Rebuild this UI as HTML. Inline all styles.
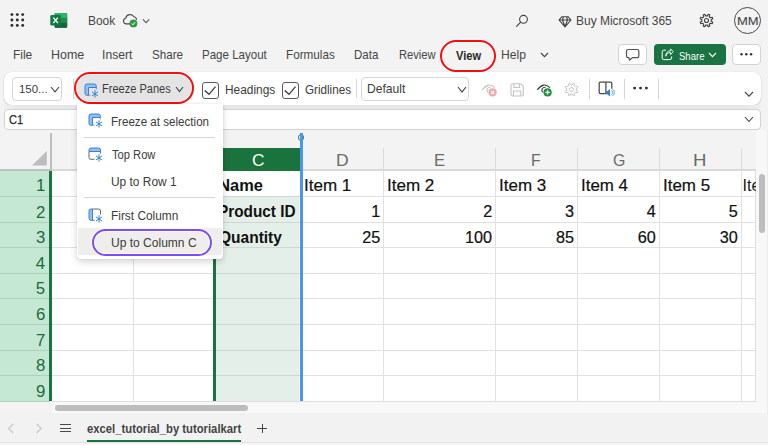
<!DOCTYPE html>
<html><head><meta charset="utf-8">
<style>
*{margin:0;padding:0;box-sizing:border-box}
html,body{width:768px;height:445px;overflow:hidden;background:#f3f3f3;font-family:"Liberation Sans",sans-serif;color:#424242;position:relative}
.a{position:absolute;white-space:nowrap}
.dot{position:absolute;width:3px;height:3px;background:#2b2b2b;border-radius:1px}
.sep{position:absolute;width:1px;background:#d6d6d6}
</style></head><body>
<svg class="a" style="left:8px;top:11px" width="18" height="18" viewBox="0 0 18 18"><circle cx="3.9" cy="3.6" r="1.45" fill="#2b2b2b"/><circle cx="9.3" cy="3.6" r="1.45" fill="#2b2b2b"/><circle cx="14.7" cy="3.6" r="1.45" fill="#2b2b2b"/><circle cx="3.9" cy="9.0" r="1.45" fill="#2b2b2b"/><circle cx="9.3" cy="9.0" r="1.45" fill="#2b2b2b"/><circle cx="14.7" cy="9.0" r="1.45" fill="#2b2b2b"/><circle cx="3.9" cy="14.4" r="1.45" fill="#2b2b2b"/><circle cx="9.3" cy="14.4" r="1.45" fill="#2b2b2b"/><circle cx="14.7" cy="14.4" r="1.45" fill="#2b2b2b"/></svg>

<svg class="a" style="left:50px;top:12px" width="18" height="17" viewBox="0 0 18 17">
<path d="M4.6 0.9 H16 A1.2 1.2 0 0 1 17.2 2.1 V14.5 A1.2 1.2 0 0 1 16 15.7 H5.8 A1.2 1.2 0 0 1 4.6 14.5 Z" fill="#1d8a50"/>
<path d="M4.6 0.9 H16 A1.2 1.2 0 0 1 17.2 2.1 V5.9 H4.6 Z" fill="#2fb26f"/>
<rect x="4.6" y="5.9" width="12.6" height="5" fill="#1e8b4f"/>
<path d="M4.6 10.9 H17.2 V14.5 A1.2 1.2 0 0 1 16 15.7 H5.8 A1.2 1.2 0 0 1 4.6 14.5 Z" fill="#17653a"/>
<rect x="0.3" y="3" width="10.6" height="10.6" rx="1.3" fill="#107c41"/>
<path d="M3.3 5.6 L7.9 11 M7.9 5.6 L3.3 11" stroke="#fff" stroke-width="1.3"/>
</svg>
<div class="a" style="left:87.92px;top:11.80px;font-size:13.23px;line-height:18px;color:#464646;transform:scaleX(0.9043);transform-origin:0 0">Book</div>
<svg class="a" style="left:118px;top:8px" width="38" height="24" viewBox="0 0 38 24">
<path d="M12.5 15.9 H8.2 A2.9 2.9 0 0 1 7.7 10.2 A4.5 4.5 0 0 1 16 8.8 A2.7 2.7 0 0 1 18.4 11.9" fill="none" stroke="#4a4a4a" stroke-width="1.15"/>
<circle cx="15.4" cy="15.4" r="3.9" fill="#2e9a47"/>
<path d="M13.6 15.6 L14.9 16.8 L17.1 14.2" stroke="#fff" stroke-width="1" fill="none"/>
<path d="M24.9 11.3 L28.1 14.6 L31.3 11.3" stroke="#5a5a5a" stroke-width="1.1" fill="none"/>
</svg>
<svg class="a" style="left:515px;top:14px" width="14" height="14" viewBox="0 0 14 14"><circle cx="8.5" cy="5.3" r="3.9" fill="none" stroke="#424242" stroke-width="1.1"/><path d="M5.7 8.2 L1.3 12.6" stroke="#424242" stroke-width="1.2"/></svg>
<svg class="a" style="left:557.5px;top:15.5px" width="14" height="12" viewBox="0 0 14 12"><path d="M3.7 0.8 H10.3 L13 4 L7 10.8 L1 4 Z M1 4 H13 M5.3 0.8 L4.5 4 L7 10.8 L9.5 4 L8.7 0.8" fill="none" stroke="#424242" stroke-width="1.1" stroke-linejoin="round"/></svg>
<div class="a" style="left:576.02px;top:12.10px;font-size:13.08px;line-height:18px;color:#464646;transform:scaleX(0.9149);transform-origin:0 0">Buy Microsoft 365</div>
<svg class="a" style="left:699px;top:13px" width="15" height="15" viewBox="0 0 15 15"><path d="M12.14 8.27 L13.77 9.22 L13.15 10.72 L11.32 10.23 L10.23 11.32 L10.72 13.15 L9.22 13.77 L8.27 12.14 L6.73 12.14 L5.78 13.77 L4.28 13.15 L4.77 11.32 L3.68 10.23 L1.85 10.72 L1.23 9.22 L2.86 8.27 L2.86 6.73 L1.23 5.78 L1.85 4.28 L3.68 4.77 L4.77 3.68 L4.28 1.85 L5.78 1.23 L6.73 2.86 L8.27 2.86 L9.22 1.23 L10.72 1.85 L10.23 3.68 L11.32 4.77 L13.15 4.28 L13.77 5.78 L12.14 6.73 Z" fill="none" stroke="#424242" stroke-width="1.15" stroke-linejoin="round"/><circle cx="7.5" cy="7.5" r="2" fill="none" stroke="#424242" stroke-width="1.1"/></svg>
<div class="a" style="left:734.2px;top:6.9px;width:27px;height:27px;border:1.25px solid #4a4a4a;border-radius:50%"></div>
<div class="a" style="left:736.53px;top:14.20px;font-size:10.61px;line-height:15px;color:#444;transform:scaleX(1.2236);transform-origin:0 0;-webkit-text-stroke:0.1px #444">MM</div>
<div class="a" style="left:12.52px;top:46.30px;font-size:13.37px;line-height:18px;color:#464646;transform:scaleX(0.8939);transform-origin:0 0">File</div>
<div class="a" style="left:50.58px;top:46.30px;font-size:13.37px;line-height:18px;color:#464646;transform:scaleX(0.9329);transform-origin:0 0">Home</div>
<div class="a" style="left:102.48px;top:46.30px;font-size:13.37px;line-height:18px;color:#464646;transform:scaleX(0.9093);transform-origin:0 0">Insert</div>
<div class="a" style="left:151.77px;top:46.30px;font-size:13.37px;line-height:18px;color:#464646;transform:scaleX(0.8700);transform-origin:0 0">Share</div>
<div class="a" style="left:201.55px;top:46.30px;font-size:13.37px;line-height:18px;color:#464646;transform:scaleX(0.8633);transform-origin:0 0">Page Layout</div>
<div class="a" style="left:286.14px;top:46.30px;font-size:13.37px;line-height:18px;color:#464646;transform:scaleX(0.8754);transform-origin:0 0">Formulas</div>
<div class="a" style="left:354.45px;top:46.30px;font-size:13.37px;line-height:18px;color:#464646;transform:scaleX(0.8619);transform-origin:0 0">Data</div>
<div class="a" style="left:398.98px;top:46.30px;font-size:13.37px;line-height:18px;color:#464646;transform:scaleX(0.8345);transform-origin:0 0">Review</div>
<div class="a" style="left:500.51px;top:46.30px;font-size:13.37px;line-height:18px;color:#464646;transform:scaleX(0.9054);transform-origin:0 0">Help</div>
<div class="a" style="left:455.72px;top:46.50px;font-size:12.94px;line-height:17px;color:#2b2b2b;font-weight:bold;transform:scaleX(0.8567);transform-origin:0 0">View</div>
<svg class="a" style="left:540px;top:52px" width="9" height="6" viewBox="0 0 9 6"><path d="M1 1 L4.5 4.6 L8 1" stroke="#424242" stroke-width="1.1" fill="none"/></svg>
<div class="a" style="left:440.4px;top:39.75px;width:55.7px;height:32.15px;border:2.9px solid #ff0a0a;border-radius:16px;box-shadow:0 0 0 0.9px rgba(255,255,255,0.75),inset 0 0 0 0.9px rgba(255,255,255,0.75)"></div>
<div class="a" style="left:618px;top:44px;width:29px;height:21px;background:#fff;border:1px solid #d4d4d4;border-radius:4px"></div>
<svg class="a" style="left:625px;top:48px" width="15" height="14" viewBox="0 0 15 14"><path d="M7.3 9.6 H12.2 A1.6 1.6 0 0 0 13.8 8 V3.1 A1.6 1.6 0 0 0 12.2 1.5 H3.1 A1.6 1.6 0 0 0 1.5 3.1 V8 A1.6 1.6 0 0 0 3.1 9.6 H3.9 L4.5 12.2 Z" fill="none" stroke="#505050" stroke-width="1.2" stroke-linejoin="round"/></svg>
<div class="a" style="left:653.5px;top:44px;width:72px;height:21px;background:#1a7343;border-radius:4px"></div>
<svg class="a" style="left:661px;top:48px" width="13" height="13" viewBox="0 0 13 13"><path d="M5 2.2 H2.8 A1.6 1.6 0 0 0 1.2 3.8 V10 A1.6 1.6 0 0 0 2.8 11.6 H9 A1.6 1.6 0 0 0 10.6 10 V8.5" fill="none" stroke="#fff" stroke-width="1"/><path d="M4.8 8.2 C5.2 5.6 7 4.6 9.6 4.6 V6.6 L12.2 3.6 L9.6 0.9 V2.8 C6.4 2.8 4.9 5 4.8 8.2 Z" fill="none" stroke="#fff" stroke-width="0.9" stroke-linejoin="round"/></svg>
<svg class="a" style="left:708px;top:52px" width="9" height="6" viewBox="0 0 9 6"><path d="M1 1 L4.5 4.6 L8 1" stroke="#fff" stroke-width="1.1" fill="none"/></svg>
<div class="a" style="left:732px;top:44px;width:29px;height:21px;background:#fff;border:1px solid #d4d4d4;border-radius:4px"></div>
<div class="a" style="left:678.57px;top:47.70px;font-size:11.48px;line-height:16px;color:#fff;transform:scaleX(0.8308);transform-origin:0 0">Share</div>
<svg class="a" style="left:736px;top:50px" width="20" height="8" viewBox="0 0 20 8"><circle cx="5.5" cy="4.2" r="1.2" fill="#333"/><circle cx="10.3" cy="4.2" r="1.2" fill="#333"/><circle cx="15.1" cy="4.2" r="1.2" fill="#333"/></svg>
<div class="a" style="left:4px;top:72px;width:757px;height:33px;background:#fff;border-radius:8px;box-shadow:0 1px 2px rgba(0,0,0,0.16),0 0 1px rgba(0,0,0,0.12)"></div>
<div class="a" style="left:11.5px;top:77px;width:50px;height:23.5px;border:1px solid #d6d6d6;border-radius:4px;background:#fff"></div>
<div class="a" style="left:18.63px;top:80.80px;font-size:11.63px;line-height:16px;color:#3b3b3b;transform:scaleX(0.9836);transform-origin:0 0">150...</div>
<svg class="a" style="left:50.4px;top:85.6px" width="10" height="7" viewBox="0 0 10 7"><path d="M1 1 L5.00 5.80 L9 1" stroke="#424242" stroke-width="1.1" fill="none"/></svg>
<div class="sep" style="left:72.5px;top:79px;height:20px"></div>
<div class="a" style="left:75.5px;top:73.5px;width:118px;height:29.5px;background:#e4e4e4;border-radius:15px"></div>
<svg class="a" style="left:83.5px;top:82.5px" width="16" height="15" viewBox="0 0 16 15">
<path d="M12.3 4.5 V3 A2 2 0 0 0 10.3 1 H3 A2 2 0 0 0 1 3 V10.3 A2 2 0 0 0 3 12.3 H4.5 V4.5 Z" fill="#8ec0f2" stroke="#3a80d8" stroke-width="1"/>
<path d="M12.3 4.5 V6.5 M4.5 12.3 H6.5" stroke="#777" stroke-width="0.8"/>
<path d="M11 7.2 V14.6 M8 8.9 L14 12.9 M14 8.9 L8 12.9" stroke="#2f86d6" stroke-width="1"/>
</svg>
<div class="a" style="left:101.59px;top:81.10px;font-size:12.35px;line-height:17px;color:#3b3b3b;transform:scaleX(0.8946);transform-origin:0 0">Freeze Panes</div>
<svg class="a" style="left:175.0px;top:85.7px" width="9" height="7" viewBox="0 0 9 7"><path d="M1 1 L4.50 5.60 L8 1" stroke="#424242" stroke-width="1.1" fill="none"/></svg>
<div class="a" style="left:74.1px;top:71.9px;width:120.4px;height:32.3px;border:2.9px solid #ff0a0a;border-radius:16.5px;box-shadow:0 0 0 0.9px rgba(255,255,255,0.75),inset 0 0 0 0.9px rgba(255,255,255,0.75)"></div>
<div class="a" style="left:202.1px;top:82px;width:16.7px;height:16.7px;border:1px solid #5a5a5a;border-radius:3px"></div><svg class="a" style="left:202.1px;top:82px" width="17" height="17" viewBox="0 0 17 17"><path d="M2.7 8.6 L7 12.3 L13.5 4.6" fill="none" stroke="#3b3b3b" stroke-width="1.3"/></svg>
<div class="a" style="left:225.03px;top:82.40px;font-size:12.21px;line-height:17px;color:#3b3b3b;transform:scaleX(0.9732);transform-origin:0 0">Headings</div>
<div class="a" style="left:282.0px;top:82px;width:16.7px;height:16.7px;border:1px solid #5a5a5a;border-radius:3px"></div><svg class="a" style="left:282.0px;top:82px" width="17" height="17" viewBox="0 0 17 17"><path d="M2.7 8.6 L7 12.3 L13.5 4.6" fill="none" stroke="#3b3b3b" stroke-width="1.3"/></svg>
<div class="a" style="left:305.41px;top:82.40px;font-size:12.21px;line-height:17px;color:#3b3b3b;transform:scaleX(0.9550);transform-origin:0 0">Gridlines</div>
<div class="sep" style="left:355.5px;top:78.5px;height:19.5px"></div>
<div class="a" style="left:360.5px;top:77px;width:108px;height:23.5px;border:1px solid #d6d6d6;border-radius:4px;background:#fff"></div>
<div class="a" style="left:366.81px;top:81.00px;font-size:12.35px;line-height:17px;color:#3b3b3b;transform:scaleX(0.9779);transform-origin:0 0">Default</div>
<svg class="a" style="left:456.6px;top:85.5px" width="10" height="8" viewBox="0 0 10 8"><path d="M1 1 L5.00 6.00 L9 1" stroke="#424242" stroke-width="1.1" fill="none"/></svg>
<svg class="a" style="left:477px;top:78px" width="26" height="22" viewBox="0 0 26 22"><path d="M5.3 11.9 Q11.5 3.4 17.9 9.7" fill="none" stroke="#c4c4c4" stroke-width="1.15"/><path d="M10.6 14.6 Q8.2 9.6 13.6 9.3" fill="none" stroke="#c4c4c4" stroke-width="1.15"/><circle cx="15.6" cy="14.4" r="4.1" fill="#f2a7ad"/><path d="M14 12.8 L17.2 16 M17.2 12.8 L14 16" stroke="#fff" stroke-width="1.1"/></svg>
<svg class="a" style="left:509.5px;top:82.5px" width="15" height="14" viewBox="0 0 15 14"><path d="M2.5 0.8 H10.8 L13.3 3.3 V11.5 A1.5 1.5 0 0 1 11.8 13 H2.5 A1.5 1.5 0 0 1 1 11.5 V2.3 A1.5 1.5 0 0 1 2.5 0.8 Z M4 0.8 V4.5 H9.5 V0.8 M3.5 13 V8 H10.8 V13" fill="none" stroke="#c4c4c4" stroke-width="1.1"/></svg>
<svg class="a" style="left:532px;top:78px" width="26" height="22" viewBox="0 0 26 22"><path d="M5.3 11.9 Q11.5 3.4 17.9 9.7" fill="none" stroke="#3b3b3b" stroke-width="1.15"/><path d="M10.6 14.6 Q8.2 9.6 13.6 9.3" fill="none" stroke="#3b3b3b" stroke-width="1.15"/><circle cx="15.6" cy="14.4" r="4.1" fill="#1f8f3e"/><path d="M15.6 12.2 V16.6 M13.4 14.4 H17.8" stroke="#fff" stroke-width="1.4"/></svg>
<svg class="a" style="left:563.5px;top:82px" width="15" height="15" viewBox="0 0 15 15"><path d="M12.14 8.27 L13.77 9.22 L13.15 10.72 L11.32 10.23 L10.23 11.32 L10.72 13.15 L9.22 13.77 L8.27 12.14 L6.73 12.14 L5.78 13.77 L4.28 13.15 L4.77 11.32 L3.68 10.23 L1.85 10.72 L1.23 9.22 L2.86 8.27 L2.86 6.73 L1.23 5.78 L1.85 4.28 L3.68 4.77 L4.77 3.68 L4.28 1.85 L5.78 1.23 L6.73 2.86 L8.27 2.86 L9.22 1.23 L10.72 1.85 L10.23 3.68 L11.32 4.77 L13.15 4.28 L13.77 5.78 L12.14 6.73 Z" fill="none" stroke="#c4c4c4" stroke-width="1" stroke-linejoin="round"/><circle cx="7.5" cy="7.5" r="2" fill="none" stroke="#c4c4c4" stroke-width="1"/></svg>
<div class="sep" style="left:588.5px;top:79px;height:19.5px"></div>
<svg class="a" style="left:594px;top:78px" width="26" height="22" viewBox="0 0 26 22"><path d="M11.9 15.6 H6.3 A1.1 1.1 0 0 1 5.2 14.5 V5.3 A1.1 1.1 0 0 1 6.3 4.2 H16.7 A1.1 1.1 0 0 1 17.8 5.3 V10.8 M11.9 4.2 V15.6" fill="none" stroke="#4a4a4a" stroke-width="1.25" stroke-linejoin="round"/><path d="M12 13.2 H13.2 L16 10.9 V18.5 L13.2 16.2 H12 Z" fill="#2f80d1"/><path d="M17.3 12.4 A2.4 2.4 0 0 1 17.3 16.6 M18.6 11.1 A4.2 4.2 0 0 1 18.6 17.9" fill="none" stroke="#5a9ee0" stroke-width="1"/></svg>
<div class="sep" style="left:623.5px;top:79px;height:19.5px"></div>
<svg class="a" style="left:630px;top:84px" width="20" height="8" viewBox="0 0 20 8"><circle cx="4.6" cy="4.1" r="1.45" fill="#2e2e2e"/><circle cx="10.5" cy="4.1" r="1.45" fill="#2e2e2e"/><circle cx="16.4" cy="4.1" r="1.45" fill="#2e2e2e"/></svg>
<div class="sep" style="left:658.3px;top:79px;height:19.5px"></div>
<svg class="a" style="left:743.5px;top:91.2px" width="10" height="7" viewBox="0 0 10 7"><path d="M1 1 L5.00 5.10 L9 1" stroke="#424242" stroke-width="1.1" fill="none"/></svg>
<div class="a" style="left:4px;top:105px;width:757px;height:5px;background:linear-gradient(90deg,#f0f0f0 0px,#e7e7e7 14px,#e7e7e7 743px,#f0f0f0 757px)"></div>
<div class="a" style="left:4.2px;top:109.1px;width:756.6px;height:21px;background:#fff;border:1px solid #d2d2d2;border-radius:4px"></div>
<div class="a" style="left:8.84px;top:111.70px;font-size:12.06px;line-height:17px;color:#2a2a2a;transform:scaleX(0.9142);transform-origin:0 0;-webkit-text-stroke:0.25px #2a2a2a">C1</div>
<svg class="a" style="left:743.5px;top:116.0px" width="10" height="7" viewBox="0 0 10 7"><path d="M1 1 L5.00 5.50 L9 1" stroke="#424242" stroke-width="1.1" fill="none"/></svg>
<div class="a" style="left:0.00px;top:130.00px;width:768.00px;height:41.00px;background:#f3f3f3"></div>
<div class="a" style="left:52.00px;top:168.50px;width:704.00px;height:2.50px;background:#dadada"></div>
<div class="a" style="left:0.00px;top:168.50px;width:52.00px;height:2.50px;background:#c2c2c2"></div>
<div class="a" style="left:49.60px;top:133.00px;width:2.20px;height:38.00px;background:#bdbdbd"></div>
<svg class="a" style="left:31px;top:150px" width="17" height="17" viewBox="0 0 17 17"><path d="M1 15.6 L15.8 1 V15.6 Z" fill="#bdbdbd"/></svg>
<div class="a" style="left:133.00px;top:147.50px;width:1.00px;height:22.50px;background:#dcdcdc"></div>
<div class="a" style="left:214.00px;top:147.50px;width:1.00px;height:22.50px;background:#dcdcdc"></div>
<div class="a" style="left:300.00px;top:147.50px;width:1.00px;height:22.50px;background:#dcdcdc"></div>
<div class="a" style="left:383.30px;top:147.50px;width:1.00px;height:22.50px;background:#dcdcdc"></div>
<div class="a" style="left:495.30px;top:147.50px;width:1.00px;height:22.50px;background:#dcdcdc"></div>
<div class="a" style="left:577.20px;top:147.50px;width:1.00px;height:22.50px;background:#dcdcdc"></div>
<div class="a" style="left:659.00px;top:147.50px;width:1.00px;height:22.50px;background:#dcdcdc"></div>
<div class="a" style="left:741.00px;top:147.50px;width:1.00px;height:22.50px;background:#dcdcdc"></div>
<div class="a" style="left:52.00px;top:171.00px;width:704.00px;height:230.00px;background:#ffffff"></div>
<div class="a" style="left:0.00px;top:171.00px;width:49.30px;height:230.00px;background:#c4e8d4"></div>
<div class="a" style="left:0.00px;top:195.80px;width:49.50px;height:1.00px;background:#a9d6b8"></div>
<div class="a" style="left:0.00px;top:221.50px;width:49.50px;height:1.00px;background:#a9d6b8"></div>
<div class="a" style="left:0.00px;top:247.00px;width:49.50px;height:1.00px;background:#a9d6b8"></div>
<div class="a" style="left:0.00px;top:272.70px;width:49.50px;height:1.00px;background:#a9d6b8"></div>
<div class="a" style="left:0.00px;top:298.00px;width:49.50px;height:1.00px;background:#a9d6b8"></div>
<div class="a" style="left:0.00px;top:323.90px;width:49.50px;height:1.00px;background:#a9d6b8"></div>
<div class="a" style="left:0.00px;top:349.50px;width:49.50px;height:1.00px;background:#a9d6b8"></div>
<div class="a" style="left:0.00px;top:375.10px;width:49.50px;height:1.00px;background:#a9d6b8"></div>
<div class="a" style="left:0.00px;top:400.50px;width:49.50px;height:1.00px;background:#a9d6b8"></div>
<div class="a" style="left:216.00px;top:196.00px;width:83.00px;height:205.00px;background:#e5efe9"></div>
<div class="a" style="left:52.00px;top:195.80px;width:704.00px;height:1.00px;background:#e1e1e1"></div>
<div class="a" style="left:216.00px;top:195.80px;width:84.00px;height:1.00px;background:#cfd8d2"></div>
<div class="a" style="left:52.00px;top:221.50px;width:704.00px;height:1.00px;background:#e1e1e1"></div>
<div class="a" style="left:216.00px;top:221.50px;width:84.00px;height:1.00px;background:#cfd8d2"></div>
<div class="a" style="left:52.00px;top:247.00px;width:704.00px;height:1.00px;background:#e1e1e1"></div>
<div class="a" style="left:216.00px;top:247.00px;width:84.00px;height:1.00px;background:#cfd8d2"></div>
<div class="a" style="left:52.00px;top:272.70px;width:704.00px;height:1.00px;background:#e1e1e1"></div>
<div class="a" style="left:216.00px;top:272.70px;width:84.00px;height:1.00px;background:#cfd8d2"></div>
<div class="a" style="left:52.00px;top:298.00px;width:704.00px;height:1.00px;background:#e1e1e1"></div>
<div class="a" style="left:216.00px;top:298.00px;width:84.00px;height:1.00px;background:#cfd8d2"></div>
<div class="a" style="left:52.00px;top:323.90px;width:704.00px;height:1.00px;background:#e1e1e1"></div>
<div class="a" style="left:216.00px;top:323.90px;width:84.00px;height:1.00px;background:#cfd8d2"></div>
<div class="a" style="left:52.00px;top:349.50px;width:704.00px;height:1.00px;background:#e1e1e1"></div>
<div class="a" style="left:216.00px;top:349.50px;width:84.00px;height:1.00px;background:#cfd8d2"></div>
<div class="a" style="left:52.00px;top:375.10px;width:704.00px;height:1.00px;background:#e1e1e1"></div>
<div class="a" style="left:216.00px;top:375.10px;width:84.00px;height:1.00px;background:#cfd8d2"></div>
<div class="a" style="left:52.00px;top:400.50px;width:704.00px;height:1.00px;background:#e1e1e1"></div>
<div class="a" style="left:216.00px;top:400.50px;width:84.00px;height:1.00px;background:#cfd8d2"></div>
<div class="a" style="left:133.00px;top:171.00px;width:1.00px;height:230.00px;background:#e1e1e1"></div>
<div class="a" style="left:383.30px;top:171.00px;width:1.00px;height:230.00px;background:#e1e1e1"></div>
<div class="a" style="left:495.30px;top:171.00px;width:1.00px;height:230.00px;background:#e1e1e1"></div>
<div class="a" style="left:577.20px;top:171.00px;width:1.00px;height:230.00px;background:#e1e1e1"></div>
<div class="a" style="left:659.00px;top:171.00px;width:1.00px;height:230.00px;background:#e1e1e1"></div>
<div class="a" style="left:741.00px;top:171.00px;width:1.00px;height:230.00px;background:#e1e1e1"></div>
<div class="a" style="left:755.30px;top:171.00px;width:1.00px;height:230.00px;background:#dedede"></div>
<div class="a" style="left:214.50px;top:147.50px;width:86.00px;height:23.50px;background:#1a723c"></div>
<div class="a" style="left:49.30px;top:171.00px;width:2.70px;height:230.00px;background:#1a7340"></div>
<div class="a" style="left:213.00px;top:171.00px;width:3.00px;height:230.00px;background:#1a7340"></div>
<div class="a" style="left:252.12px;top:149.10px;font-size:17.15px;line-height:22px;color:#ffffff;transform:scaleX(1.0127);transform-origin:0 0">C</div>
<div class="a" style="left:336.16px;top:149.10px;font-size:17.15px;line-height:22px;color:#6b6b6b;transform:scaleX(1.0238);transform-origin:0 0">D</div>
<div class="a" style="left:434.22px;top:149.10px;font-size:17.15px;line-height:22px;color:#6b6b6b;transform:scaleX(0.9789);transform-origin:0 0">E</div>
<div class="a" style="left:531.49px;top:149.10px;font-size:17.15px;line-height:22px;color:#6b6b6b;transform:scaleX(0.9304);transform-origin:0 0">F</div>
<div class="a" style="left:612.60px;top:149.10px;font-size:17.15px;line-height:22px;color:#6b6b6b;transform:scaleX(0.9288);transform-origin:0 0">G</div>
<div class="a" style="left:693.37px;top:149.10px;font-size:17.15px;line-height:22px;color:#6b6b6b;transform:scaleX(1.0855);transform-origin:0 0">H</div>
<div class="a" style="left:35.98px;top:175.20px;font-size:16.80px;line-height:21px;color:#1d6b3b">1</div>
<div class="a" style="left:36.00px;top:201.50px;font-size:16.80px;line-height:21px;color:#1d6b3b">2</div>
<div class="a" style="left:35.89px;top:227.20px;font-size:16.80px;line-height:21px;color:#1d6b3b">3</div>
<div class="a" style="left:35.65px;top:252.70px;font-size:16.80px;line-height:21px;color:#1d6b3b">4</div>
<div class="a" style="left:35.86px;top:278.40px;font-size:16.80px;line-height:21px;color:#1d6b3b">5</div>
<div class="a" style="left:35.89px;top:303.70px;font-size:16.80px;line-height:21px;color:#1d6b3b">6</div>
<div class="a" style="left:36.00px;top:329.60px;font-size:16.80px;line-height:21px;color:#1d6b3b">7</div>
<div class="a" style="left:35.89px;top:355.20px;font-size:16.80px;line-height:21px;color:#1d6b3b">8</div>
<div class="a" style="left:35.95px;top:380.80px;font-size:16.80px;line-height:21px;color:#1d6b3b">9</div>
<div class="a" style="left:303.53px;top:174.50px;font-size:16.20px;line-height:21px;color:#111;transform:scaleX(1.0508);transform-origin:0 0;-webkit-text-stroke:0.2px #111">Item 1</div>
<div class="a" style="left:386.83px;top:174.50px;font-size:16.20px;line-height:21px;color:#111;transform:scaleX(1.0514);transform-origin:0 0;-webkit-text-stroke:0.2px #111">Item 2</div>
<div class="a" style="left:498.83px;top:174.50px;font-size:16.20px;line-height:21px;color:#111;transform:scaleX(1.0488);transform-origin:0 0;-webkit-text-stroke:0.2px #111">Item 3</div>
<div class="a" style="left:580.74px;top:174.50px;font-size:16.20px;line-height:21px;color:#111;transform:scaleX(1.0430);transform-origin:0 0;-webkit-text-stroke:0.2px #111">Item 4</div>
<div class="a" style="left:662.53px;top:174.50px;font-size:16.20px;line-height:21px;color:#111;transform:scaleX(1.0481);transform-origin:0 0;-webkit-text-stroke:0.2px #111">Item 5</div>
<div class="a" style="left:741.5px;top:171px;width:14px;height:25px;overflow:hidden"><div class="a" style="left:1.00px;top:3.50px;font-size:16.20px;line-height:21px;color:#1a1a1a">Item 6</div>
</div>
<div class="a" style="left:371.28px;top:200.80px;font-size:16.20px;line-height:21px;color:#111;-webkit-text-stroke:0.2px #111">1</div>
<div class="a" style="left:483.31px;top:200.80px;font-size:16.20px;line-height:21px;color:#111;-webkit-text-stroke:0.2px #111">2</div>
<div class="a" style="left:565.10px;top:200.80px;font-size:16.20px;line-height:21px;color:#111;-webkit-text-stroke:0.2px #111">3</div>
<div class="a" style="left:646.66px;top:200.80px;font-size:16.20px;line-height:21px;color:#111;-webkit-text-stroke:0.2px #111">4</div>
<div class="a" style="left:728.87px;top:200.80px;font-size:16.20px;line-height:21px;color:#111;-webkit-text-stroke:0.2px #111">5</div>
<div class="a" style="left:362.16px;top:226.50px;font-size:16.20px;line-height:21px;color:#111;-webkit-text-stroke:0.2px #111">25</div>
<div class="a" style="left:465.10px;top:226.50px;font-size:16.20px;line-height:21px;color:#111;-webkit-text-stroke:0.2px #111">100</div>
<div class="a" style="left:556.06px;top:226.50px;font-size:16.20px;line-height:21px;color:#111;-webkit-text-stroke:0.2px #111">85</div>
<div class="a" style="left:637.81px;top:226.50px;font-size:16.20px;line-height:21px;color:#111;-webkit-text-stroke:0.2px #111">60</div>
<div class="a" style="left:719.81px;top:226.50px;font-size:16.20px;line-height:21px;color:#111;-webkit-text-stroke:0.2px #111">30</div>
<div class="a" style="left:218.20px;top:174.80px;font-size:16.40px;line-height:21px;color:#111;font-weight:bold">Name</div>
<div class="a" style="left:218.27px;top:201.10px;font-size:16.40px;line-height:21px;color:#111;font-weight:bold;transform:scaleX(0.9356);transform-origin:0 0">Product ID</div>
<div class="a" style="left:218.66px;top:226.80px;font-size:16.40px;line-height:21px;color:#111;font-weight:bold;transform:scaleX(0.9460);transform-origin:0 0">Quantity</div>
<div class="a" style="left:297.9px;top:134.2px;width:6.4px;height:6.4px;border:1.3px solid #2e8b4a;border-radius:50%"></div>
<div class="a" style="left:300.30px;top:132.80px;width:2.60px;height:268.20px;background:#4796ef"></div>
<div class="a" style="left:756.00px;top:130.00px;width:12.00px;height:284.00px;background:#f8f8f8"></div>
<div class="a" style="left:759.20px;top:173.60px;width:6.20px;height:59.70px;background:#bdbdbd;border-radius:3px"></div>
<div class="a" style="left:52.00px;top:401.00px;width:716.00px;height:12.50px;background:#f8f8f8"></div>
<div class="a" style="left:0.00px;top:413.00px;width:768.00px;height:32.00px;background:#f2f2f2"></div>
<div class="a" style="left:52.00px;top:400.50px;width:704.30px;height:1.00px;background:#dedede"></div>
<div class="a" style="left:767.00px;top:130.00px;width:1.00px;height:283.00px;background:#ececec"></div>
<div class="a" style="left:54.60px;top:404.80px;width:193.10px;height:6.70px;background:#bdbdbd;border-radius:3.5px"></div>
<svg class="a" style="left:7px;top:423px" width="8" height="11" viewBox="0 0 8 11"><path d="M6.2 1 L1.6 5.5 L6.2 10" fill="none" stroke="#c6c6c6" stroke-width="1.1"/></svg>
<svg class="a" style="left:34.5px;top:423px" width="8" height="11" viewBox="0 0 8 11"><path d="M1.6 1 L6.2 5.5 L1.6 10" fill="none" stroke="#c6c6c6" stroke-width="1.1"/></svg>
<div class="a" style="left:60.20px;top:424.05px;width:10.80px;height:1.10px;background:#4a4a4a"></div>
<div class="a" style="left:60.20px;top:427.65px;width:10.80px;height:1.10px;background:#4a4a4a"></div>
<div class="a" style="left:60.20px;top:431.25px;width:10.80px;height:1.10px;background:#4a4a4a"></div>
<div class="a" style="left:86.96px;top:420.70px;font-size:11.92px;line-height:16px;color:#444;font-weight:bold;transform:scaleX(0.9474);transform-origin:0 0">excel_tutorial_by tutorialkart</div>
<div class="a" style="left:0.00px;top:442.30px;width:768.00px;height:0.80px;background:#e2e2e2"></div>
<div class="a" style="left:0.00px;top:443.10px;width:768.00px;height:1.90px;background:#f7f7f7"></div>
<div class="a" style="left:87.10px;top:439.60px;width:154.10px;height:2.70px;background:#1a7340"></div>
<div class="a" style="left:257.30px;top:427.80px;width:9.80px;height:1.30px;background:#444"></div>
<div class="a" style="left:261.60px;top:423.90px;width:1.30px;height:9.10px;background:#444"></div>
<div class="a" style="left:77px;top:104px;width:146px;height:154.5px;background:#fff;border-radius:0 0 4px 4px;box-shadow:0 3px 7px rgba(0,0,0,0.16),0 0 2px rgba(0,0,0,0.1)"></div>
<div class="a" style="left:84.30px;top:136.50px;width:131.20px;height:1.00px;background:#d6d6d6"></div>
<div class="a" style="left:84.30px;top:197.00px;width:131.20px;height:1.00px;background:#d6d6d6"></div>
<div class="a" style="left:78.00px;top:228.00px;width:144.00px;height:26.50px;background:#efeeed"></div>
<svg class="a" style="left:87.8px;top:113.2px" width="16" height="15" viewBox="0 0 16 15">
<path d="M12.3 4.5 V3 A2 2 0 0 0 10.3 1 H3 A2 2 0 0 0 1 3 V10.3 A2 2 0 0 0 3 12.3 H4.5 V4.5 Z" fill="#8ec0f2" stroke="#3a80d8" stroke-width="1"/>
<path d="M12.3 4.5 V6.5 M4.5 12.3 H6.5" stroke="#777" stroke-width="0.8"/>
<path d="M11 7.2 V14.6 M8 8.9 L14 12.9 M14 8.9 L8 12.9" stroke="#2f86d6" stroke-width="1"/>
</svg>
<svg class="a" style="left:87.8px;top:147px" width="16" height="15" viewBox="0 0 16 15">
<path d="M1 4.5 V3 A2 2 0 0 1 3 1 H10.5 A2 2 0 0 1 12.5 3 V4.5 Z" fill="#8ec0f2" stroke="#3a80d8" stroke-width="1"/>
<path d="M1 4.5 V10.3 A2 2 0 0 0 3 12.3 H6.5 M12.5 4.5 V6.5" fill="none" stroke="#666" stroke-width="1"/>
<path d="M11 7.2 V14.6 M8 8.9 L14 12.9 M14 8.9 L8 12.9" stroke="#2f86d6" stroke-width="1"/>
</svg>
<svg class="a" style="left:88.3px;top:207.5px" width="16" height="15" viewBox="0 0 16 15">
<path d="M4.5 1 H3 A2 2 0 0 0 1 3 V10.3 A2 2 0 0 0 3 12.3 H4.5 Z" fill="#8ec0f2" stroke="#3a80d8" stroke-width="1"/>
<path d="M4.5 1 H10.5 A2 2 0 0 1 12.5 3 V6.5 M4.5 12.3 H6.5" fill="none" stroke="#666" stroke-width="1"/>
<path d="M11 7.2 V14.6 M8 8.9 L14 12.9 M14 8.9 L8 12.9" stroke="#2f86d6" stroke-width="1"/>
</svg>
<div class="a" style="left:111.15px;top:113.50px;font-size:12.65px;line-height:17px;color:#3b3b3b;transform:scaleX(0.9183);transform-origin:0 0">Freeze at selection</div>
<div class="a" style="left:111.85px;top:146.35px;font-size:12.72px;line-height:17px;color:#3b3b3b;transform:scaleX(0.8768);transform-origin:0 0">Top Row</div>
<div class="a" style="left:110.78px;top:174.10px;font-size:12.35px;line-height:17px;color:#3b3b3b;transform:scaleX(0.9650);transform-origin:0 0">Up to Row 1</div>
<div class="a" style="left:110.73px;top:207.70px;font-size:12.50px;line-height:17px;color:#3b3b3b;transform:scaleX(0.9506);transform-origin:0 0">First Column</div>
<div class="a" style="left:110.77px;top:235.00px;font-size:11.92px;line-height:16px;color:#3b3b3b;transform:scaleX(1.0106);transform-origin:0 0">Up to Column C</div>
<div class="a" style="left:92.2px;top:228.9px;width:119.6px;height:27.1px;border:2.9px solid #7b4efb;border-radius:14px;box-shadow:0 0 0 0.9px rgba(255,255,255,0.7),inset 0 0 0 0.9px rgba(255,255,255,0.7)"></div>
</body></html>
